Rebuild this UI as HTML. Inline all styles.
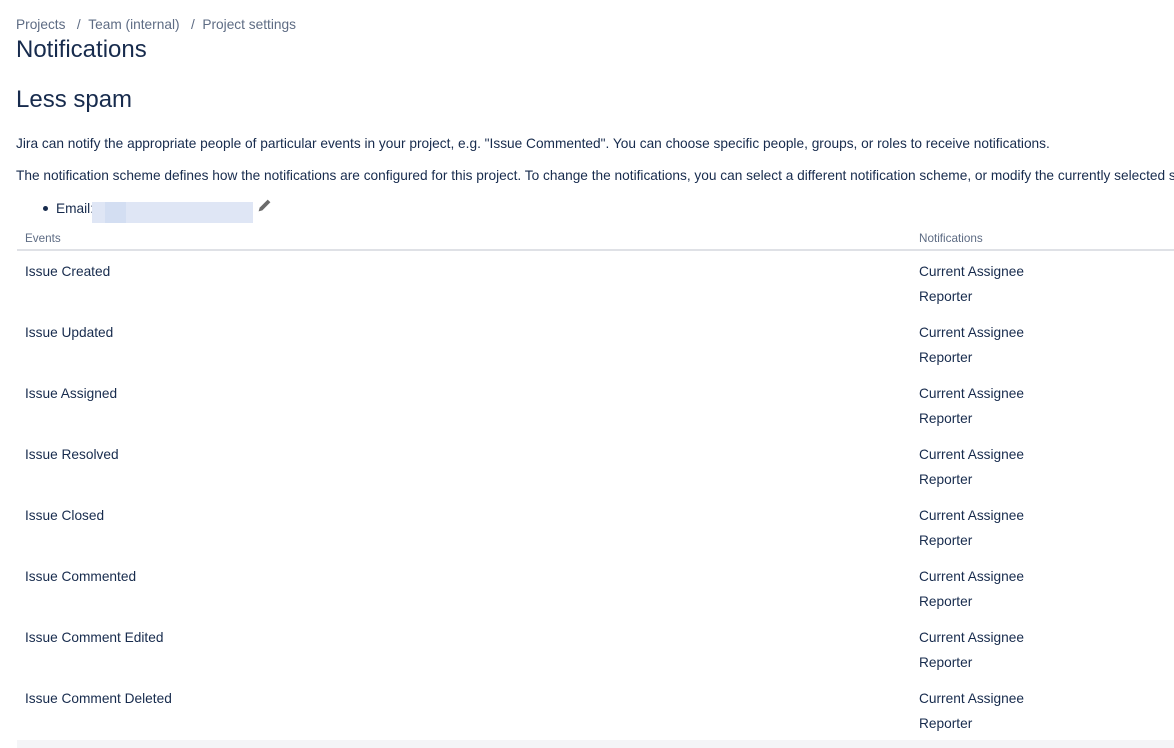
<!DOCTYPE html>
<html><head><meta charset="utf-8"><style>
body{margin:0;width:1174px;height:748px;overflow:hidden;background:#fff;font-family:"Liberation Sans",sans-serif;color:#172b4d;position:relative}
.a{position:absolute;white-space:nowrap;line-height:1}
.t{font-size:13.7px;color:#172b4d}
.h{font-size:11.7px;color:#5e6c84}
</style></head><body>
<div class="a" style="left:16px;top:18px;font-size:13.7px;color:#5e6c84">Projects&nbsp;&nbsp; / &nbsp;Team (internal)&nbsp;&nbsp; / &nbsp;Project settings</div>
<div class="a" style="left:16px;top:38px;font-size:24px">Notifications</div>
<div class="a" style="left:16px;top:88px;font-size:24px">Less spam</div>
<div class="a t" style="left:16px;top:137px">Jira can notify the appropriate people of particular events in your project, e.g. "Issue Commented". You can choose specific people, groups, or roles to receive notifications.</div>
<div class="a t" style="left:16px;top:169px">The notification scheme defines how the notifications are configured for this project. To change the notifications, you can select a different notification scheme, or modify the currently selected scheme.</div>
<div class="a" style="left:43px;top:206px;width:5px;height:5px;border-radius:50%;background:#172b4d"></div>
<div class="a t" style="left:56px;top:202px">Email:</div>
<div class="a" style="left:92px;top:202px;width:161px;height:21px;background:#dfe6f5"></div>
<div class="a" style="left:105px;top:202px;width:21px;height:21px;background:#d3def2"></div>
<svg class="a" style="left:257px;top:198px" width="15" height="15" viewBox="0 0 14 14"><path d="M1.5 12.5 L2.5 9 L10 1.5 L12.5 4 L5 11.5 Z" fill="#6b6b6b"/></svg>
<div class="a h" style="left:25px;top:233px">Events</div>
<div class="a h" style="left:919px;top:233px">Notifications</div>
<div class="a" style="left:17px;top:249px;width:1157px;height:2px;background:#dfe1e6"></div>
<div class="a" style="left:17px;top:740px;width:1157px;height:8px;background:#f4f5f7"></div>
<div id="rows"></div>
<script>
var n=["Issue Created","Issue Updated","Issue Assigned","Issue Resolved","Issue Closed","Issue Commented","Issue Comment Edited","Issue Comment Deleted"],h="";
n.forEach(function(s,i){var y=265+61*i;h+='<div class="a t" style="left:25px;top:'+y+'px">'+s+'</div><div class="a t" style="left:919px;top:'+y+'px">Current Assignee</div><div class="a t" style="left:919px;top:'+(y+25)+'px">Reporter</div>';});
document.getElementById("rows").outerHTML=h;
</script>
</body></html>
